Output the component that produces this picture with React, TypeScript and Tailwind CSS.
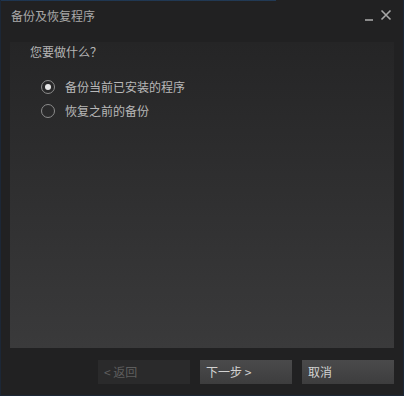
import React, { useState } from 'react';

const font = "font-['Noto_Sans_CJK_SC','Noto_Sans',sans-serif]";

const App = () => {
  const [choice, setChoice] = useState(0);
  const options = ['备份当前已安装的程序', '恢复之前的备份'];

  return (
    <div className={`relative w-[404px] h-[396px] bg-[#212122] ${font} flex flex-col overflow-hidden border-l border-r border-b border-[#1c2736]`}>
      {/* top edge highlight */}
      <div className="absolute top-0 left-0 w-[275px] h-px bg-gradient-to-r from-[#1e3550] to-[#223a55]" />

      {/* Title bar */}
      <div className="h-[42px] flex items-start justify-between pl-[10px] pr-[11px] pt-[6px]">
        <span className="text-[12px] leading-[20px] text-[#a9a9a9]">备份及恢复程序</span>
        <div className="flex items-center gap-[6px] pt-[2px]">
          <svg width="9" height="14" viewBox="0 0 9 14">
            <rect x="0" y="11" width="8" height="2" fill="#8a8a8a" />
          </svg>
          <svg width="12" height="12" viewBox="0 0 12 12">
            <path d="M1.5 1.5 L10.5 10.5 M10.5 1.5 L1.5 10.5" stroke="#a8a8a8" strokeWidth="1.6" />
          </svg>
        </div>
      </div>

      {/* Content panel */}
      <div className="mx-[9px] h-[306px] bg-gradient-to-b from-[#252526] to-[#3a3a3b] px-[20px] pt-[1px]">
        <div className="text-[12px] leading-[18px] text-[#b4b4b4]">您要做什么？</div>
        <div className="mt-[17px] pl-[11px] flex flex-col gap-[6px]">
          {options.map((label, i) => (
            <button
              key={label}
              onClick={() => setChoice(i)}
              className="flex items-center gap-[10px] h-[18px] text-left"
            >
              <span className="w-[14px] h-[14px] rounded-full border-[1.5px] border-[#8c8c8c] flex items-center justify-center">
                {choice === i && <span className="w-[6px] h-[6px] rounded-full bg-[#e8e8e8]" />}
              </span>
              <span className="text-[12px] leading-[18px] text-[#b8b8b8]">{label}</span>
            </button>
          ))}
        </div>
      </div>

      {/* Buttons */}
      <div className="flex justify-end gap-[10px] pr-[9px] mt-[12px]">
        <button className="w-[92px] h-[24px] bg-[#2a2a2b] text-[#5e5e5e] text-[12px] text-left pl-[6px]">&lt; 返回</button>
        <button className="w-[92px] h-[24px] bg-gradient-to-b from-[#4a4a4b] to-[#3d3d3e] text-[#d2d2d2] text-[12px] text-left pl-[6px]">下一步 &gt;</button>
        <button className="w-[92px] h-[24px] bg-gradient-to-b from-[#4a4a4b] to-[#3d3d3e] text-[#d2d2d2] text-[12px] text-left pl-[6px]">取消</button>
      </div>
    </div>
  );
};

export default App;
